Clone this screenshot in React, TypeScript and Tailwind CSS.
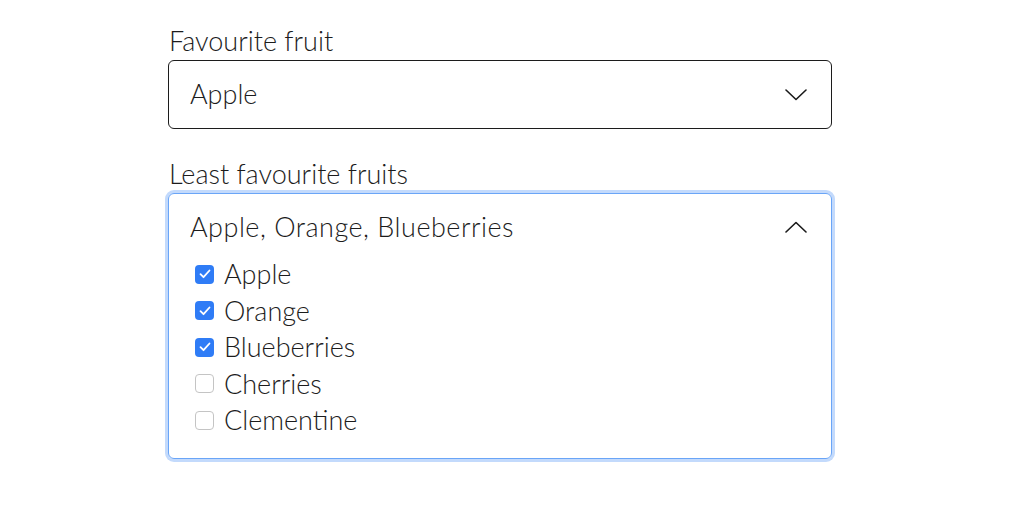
import React from 'react';

const FRUITS = [
  { name: 'Apple', checked: true },
  { name: 'Orange', checked: true },
  { name: 'Blueberries', checked: true },
  { name: 'Cherries', checked: false },
  { name: 'Clementine', checked: false },
];

function Chevron({ up }: { up?: boolean }) {
  return (
    <svg width="22" height="12" viewBox="0 0 22 12" fill="none" stroke="#1a1a1a" strokeWidth={1.6} strokeLinecap="round" strokeLinejoin="round">
      {up ? <polyline points="1,11 11,1.5 21,11" /> : <polyline points="1,1 11,10.5 21,1" />}
    </svg>
  );
}

function Box({ checked }: { checked: boolean }) {
  if (checked) {
    return (
      <span className="w-[19px] h-[19px] rounded-[4px] bg-[#2f7cf6] flex items-center justify-center flex-shrink-0">
        <svg width="12" height="10" viewBox="0 0 12 10" fill="none" stroke="white" strokeWidth={1.8} strokeLinecap="round" strokeLinejoin="round">
          <polyline points="1.5,5.2 4.5,8.2 10.5,1.5" />
        </svg>
      </span>
    );
  }
  return <span className="w-[19px] h-[19px] rounded-[4px] border border-[#c4c4c4] bg-white flex-shrink-0" />;
}

export default function App() {
  return (
    <div className="min-h-[510px] bg-white text-[#1c1c1c] font-light" style={{ fontFamily: 'Lato, "Open Sans", sans-serif' }}>
      <div className="ml-[168px] w-[664px] pt-[25px]">
        <div className="text-[27px] leading-[32px] pl-[1px] mb-[3px]">Favourite fruit</div>
        <div className="h-[69px] border border-[#1c1c1c] rounded-[6px] flex items-center justify-between pl-[21px] pr-[24px]">
          <span className="text-[27px] leading-[32px] -mt-[2px]">Apple</span>
          <Chevron />
        </div>

        <div className="text-[27px] leading-[32px] pl-[1px] mt-[29px] mb-[3px]">Least favourite fruits</div>
        <div className="border border-[#6aa5f7] rounded-[6px] shadow-[0_0_0_3px_#c3dafc] pb-[19px]">
          <div className="flex items-center justify-between pl-[21px] pr-[24px] pt-[17px]">
            <span className="text-[27px] leading-[32px] tracking-[0.5px]">Apple, Orange, Blueberries</span>
            <Chevron up />
          </div>
          <ul className="mt-[13px] pl-[26px]">
            {FRUITS.map(f => (
              <li key={f.name} className="h-[36.5px] flex items-center gap-[10px]">
                <Box checked={f.checked} />
                <span className="text-[27px] leading-[32px]">{f.name}</span>
              </li>
            ))}
          </ul>
        </div>
      </div>
    </div>
  );
}
